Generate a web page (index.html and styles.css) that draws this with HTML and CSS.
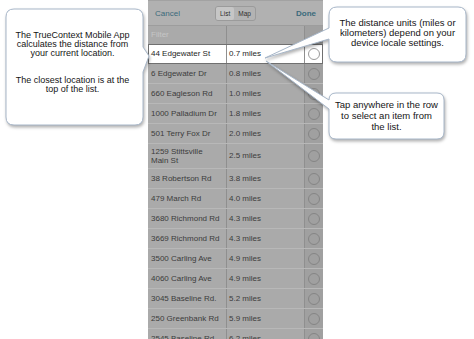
FILE: index.html
```html
<!DOCTYPE html>
<html lang="en">
<head>
  <meta charset="UTF-8" />
  <meta name="viewport" content="width=device-width, initial-scale=1.0" />
  <title>Location list</title>
  <link rel="stylesheet" href="styles.css">
</head>
<body>
  <div class="screen">
    <div class="phone">
      <div class="nav">
        <span class="nav-btn">Cancel</span>
        <div class="seg"><span class="seg-item on">List</span><span class="seg-item">Map</span></div>
        <span class="nav-btn done">Done</span>
      </div>

      <div class="row filter-row">
        <span class="cell name filter">Filter</span>
        <span class="cell dist"></span>
        <span class="cell pick"></span>
      </div>

      <ul class="list">
        <li class="row selected"><span class="cell name">44 Edgewater St</span><span class="cell dist">0.7 miles</span><span class="cell pick"><i class="radio"></i></span></li>
        <li class="row"><span class="cell name">6 Edgewater Dr</span><span class="cell dist">0.8 miles</span><span class="cell pick"><i class="radio"></i></span></li>
        <li class="row"><span class="cell name">660 Eagleson Rd</span><span class="cell dist">1.0 miles</span><span class="cell pick"><i class="radio"></i></span></li>
        <li class="row"><span class="cell name">1000 Palladium Dr</span><span class="cell dist">1.8 miles</span><span class="cell pick"><i class="radio"></i></span></li>
        <li class="row"><span class="cell name">501 Terry Fox Dr</span><span class="cell dist">2.0 miles</span><span class="cell pick"><i class="radio"></i></span></li>
        <li class="row tall"><span class="cell name">1259 Stittsville<br>Main St</span><span class="cell dist">2.5 miles</span><span class="cell pick"><i class="radio"></i></span></li>
        <li class="row"><span class="cell name">38 Robertson Rd</span><span class="cell dist">3.8 miles</span><span class="cell pick"><i class="radio"></i></span></li>
        <li class="row"><span class="cell name">479 March Rd</span><span class="cell dist">4.0 miles</span><span class="cell pick"><i class="radio"></i></span></li>
        <li class="row"><span class="cell name">3680 Richmond Rd</span><span class="cell dist">4.3 miles</span><span class="cell pick"><i class="radio"></i></span></li>
        <li class="row"><span class="cell name">3669 Richmond Rd</span><span class="cell dist">4.3 miles</span><span class="cell pick"><i class="radio"></i></span></li>
        <li class="row"><span class="cell name">3500 Carling Ave</span><span class="cell dist">4.9 miles</span><span class="cell pick"><i class="radio"></i></span></li>
        <li class="row"><span class="cell name">4060 Carling Ave</span><span class="cell dist">4.9 miles</span><span class="cell pick"><i class="radio"></i></span></li>
        <li class="row"><span class="cell name">3045 Baseline Rd.</span><span class="cell dist">5.2 miles</span><span class="cell pick"><i class="radio"></i></span></li>
        <li class="row"><span class="cell name">250 Greenbank Rd</span><span class="cell dist">5.9 miles</span><span class="cell pick"><i class="radio"></i></span></li>
        <li class="row"><span class="cell name">2545 Baseline Rd</span><span class="cell dist">6.2 miles</span><span class="cell pick"><i class="radio"></i></span></li>
      </ul>
    </div>

    <!-- callout bubbles drawn over the screenshot -->
    <svg class="callouts" width="474" height="339" viewBox="0 0 474 339">
      <path d="M14,9 H135 Q143,9 143,17 V47 L149,56 L143,72 V117 Q143,125 135,125 H14 Q6,125 6,117 V17 Q6,9 14,9 Z" />
      <path d="M337,7 H458 Q466,7 466,15 V54 Q466,62 458,62 H337 Q329,62 329,54 V39 L265,58 L329,28 V15 Q329,7 337,7 Z" />
      <path d="M336,93 H437 Q444,93 444,100 V132 Q444,139 437,139 H336 Q329,139 329,132 V109 L266,61 L329,100 Q329,93 336,93 Z" />
    </svg>

    <div class="note note-left">
      <p>The TrueContext Mobile App<br>calculates the distance from<br>your current location.</p>
      <p class="gap">The closest location is at the<br>top of the list.</p>
    </div>
    <div class="note note-units">The distance units (miles or<br>kilometers) depend on your<br>device locale settings.</div>
    <div class="note note-tap">Tap anywhere in the row<br>to select an item from<br>the list.</div>
  </div>
</body>
</html>
```

FILE: styles.css
```css
body {
  margin: 0;
  background-color: white;
  font-family: "Liberation Sans", Arial, sans-serif;
}

.screen {
  position: relative;
  width: 474px;
  height: 339px;
  overflow: hidden;
  padding-left: 148px;
  box-sizing: border-box;
}

.phone {
  width: 175px;
  height: 339px;
  background-color: #aaaaaa;
  color: #3c3c3c;
  font-size: 8px;
}

.nav {
  display: grid;
  grid-template-columns: 1fr auto 1fr;
  align-items: center;
  height: 25px;
  padding: 0 7px;
  background-color: #b1b1b1;
  border-top: 1px solid #a2a2a2;
  border-bottom: 1px solid #9d9d9d;
  box-sizing: border-box;
  height: 26px;
}

.nav-btn {
  color: #3b6a7b;
  font-size: 8px;
}

.done {
  justify-self: end;
  font-weight: bold;
}

.seg {
  display: flex;
  border: 1px solid #9b9b9b;
  border-radius: 3px;
  background-color: #b3b3b3;
  font-size: 6.5px;
  color: #2e2e2e;
}

.seg-item {
  padding: 2px 4px;
  line-height: 9px;
}

.seg-item.on {
  background-color: #c6c6c6;
  border-radius: 2px;
}

.list {
  list-style: none;
  margin: 0;
  padding: 0;
}

.row {
  display: grid;
  grid-template-columns: 79px 77px 19px;
  height: 20px;
  box-sizing: border-box;
  border-bottom: 1px solid #b8b8b8;
}

.row.tall {
  height: 25px;
}

.filter-row {
  height: 18px;
  border-bottom: none;
}

.cell {
  display: flex;
  align-items: center;
  box-sizing: border-box;
  line-height: 9.5px;
}

.name {
  padding-left: 3px;
  border-right: 1px solid #8f8f8f;
}

.dist {
  padding-left: 2px;
}

.pick {
  justify-content: center;
  background-color: #a0a0a0;
  border-left: 1px solid #8f8f8f;
}

.filter {
  color: #c6c6c6;
}

.radio {
  width: 10px;
  height: 10px;
  border: 1px solid #858585;
  border-radius: 50%;
}

.row.selected {
  background-color: white;
  color: #1e1e1e;
  outline: 1px solid #707070;
  outline-offset: -1px;
  border-bottom: none;
}

.row.selected .pick {
  background-color: white;
}

.row.selected .radio {
  border-color: #9a9a9a;
}

.callouts {
  position: absolute;
  left: 0;
  top: 0;
  filter: drop-shadow(1px 2px 1.5px rgba(0, 0, 0, 0.3));
}

.callouts path {
  fill: white;
  stroke: #a7b6c8;
  stroke-width: 1;
}

.note {
  position: absolute;
  text-align: center;
  color: #151515;
}

.note p {
  margin: 0;
}

.note-left {
  left: 4px;
  top: 31px;
  width: 137px;
  font-size: 9px;
  line-height: 9px;
}

.note-left .gap {
  margin-top: 18px;
}

.note-units {
  left: 329px;
  top: 18px;
  width: 137px;
  font-size: 9.5px;
  line-height: 10px;
}

.note-tap {
  left: 329px;
  top: 99px;
  width: 115px;
  font-size: 9.5px;
  line-height: 11px;
}
```
